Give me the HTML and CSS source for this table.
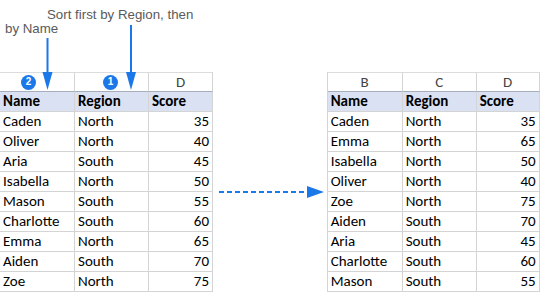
FILE: index.html
```html
<!DOCTYPE html>
<html>
<head>
<meta charset="utf-8">
<link rel="stylesheet" href="styles.css">
</head>
<body>
<div class="page">
  <div class="note">
    <div class="line1">Sort first by Region, then</div>
    <div class="line2">by Name</div>
  </div>
  <div class="main">
    <div class="sheet left">
      <div class="row colhdr">
        <div class="cell"><span class="badge b2">2</span></div>
        <div class="cell"><span class="badge b1">1</span></div>
        <div class="cell center">D</div>
      </div>
      <div class="row hdr">
        <div class="cell">Name</div><div class="cell">Region</div><div class="cell">Score</div>
      </div>
      <div class="row"><div class="cell">Caden</div><div class="cell">North</div><div class="cell num">35</div></div>
      <div class="row"><div class="cell">Oliver</div><div class="cell">North</div><div class="cell num">40</div></div>
      <div class="row"><div class="cell">Aria</div><div class="cell">South</div><div class="cell num">45</div></div>
      <div class="row"><div class="cell">Isabella</div><div class="cell">North</div><div class="cell num">50</div></div>
      <div class="row"><div class="cell">Mason</div><div class="cell">South</div><div class="cell num">55</div></div>
      <div class="row"><div class="cell">Charlotte</div><div class="cell">South</div><div class="cell num">60</div></div>
      <div class="row"><div class="cell">Emma</div><div class="cell">North</div><div class="cell num">65</div></div>
      <div class="row"><div class="cell">Aiden</div><div class="cell">South</div><div class="cell num">70</div></div>
      <div class="row"><div class="cell">Zoe</div><div class="cell">North</div><div class="cell num">75</div></div>
    </div>
    <div class="gap">
      <svg class="rarrow" width="108" height="14" viewBox="0 0 108 14">
        <line x1="1" y1="7" x2="92" y2="7" stroke="#1a78e8" stroke-width="2" stroke-dasharray="5 3"/>
        <polygon points="89,1 106,7 89,13" fill="#1a78e8"/>
      </svg>
    </div>
    <div class="sheet right">
      <div class="row colhdr">
        <div class="cell center">B</div>
        <div class="cell center">C</div>
        <div class="cell center">D</div>
      </div>
      <div class="row hdr">
        <div class="cell">Name</div><div class="cell">Region</div><div class="cell">Score</div>
      </div>
      <div class="row"><div class="cell">Caden</div><div class="cell">North</div><div class="cell num">35</div></div>
      <div class="row"><div class="cell">Emma</div><div class="cell">North</div><div class="cell num">65</div></div>
      <div class="row"><div class="cell">Isabella</div><div class="cell">North</div><div class="cell num">50</div></div>
      <div class="row"><div class="cell">Oliver</div><div class="cell">North</div><div class="cell num">40</div></div>
      <div class="row"><div class="cell">Zoe</div><div class="cell">North</div><div class="cell num">75</div></div>
      <div class="row"><div class="cell">Aiden</div><div class="cell">South</div><div class="cell num">70</div></div>
      <div class="row"><div class="cell">Aria</div><div class="cell">South</div><div class="cell num">45</div></div>
      <div class="row"><div class="cell">Charlotte</div><div class="cell">South</div><div class="cell num">60</div></div>
      <div class="row"><div class="cell">Mason</div><div class="cell">South</div><div class="cell num">55</div></div>
    </div>
  </div>
  <svg class="darrows" width="160" height="92" viewBox="0 0 160 92">
    <rect x="46.5" y="38" width="2" height="36" fill="#1a78e8"/>
    <polygon points="42.5,72 52.5,72 47.5,90" fill="#1a78e8"/>
    <rect x="130" y="25" width="2" height="49" fill="#1a78e8"/>
    <polygon points="126,72 136,72 131,90" fill="#1a78e8"/>
  </svg>
</div>
</body>
</html>
```
FILE: styles.css
```css
html, body {
  margin: 0;
  padding: 0;
  background: #fff;
}
.page {
  position: relative;
  width: 540px;
  height: 292px;
  overflow: hidden;
}
.note {
  height: 72px;
  font-family: "Liberation Sans", Arial, sans-serif;
  font-size: 13.3px;
  line-height: 14px;
  color: #5a5a5a;
  padding-top: 8px;
  box-sizing: border-box;
}
.line1 { padding-left: 47px; }
.line2 { padding-left: 5px; }
.main {
  display: flex;
  align-items: flex-start;
}
.sheet {
  font-family: Carlito, Calibri, Lato, sans-serif;
  font-size: 15px;
  color: #000;
}
.left { width: 213px; }
.right {
  width: 213px;
  border-left: 1px solid #d4d4d4;
}
.row {
  display: grid;
  grid-template-columns: 75px 74px 64px;
  height: 20px;
}
.right .row { grid-template-columns: 75px 74px 63px; }
.cell {
  box-sizing: border-box;
  height: 20px;
  border-right: 1px solid #d4d4d4;
  border-bottom: 1px solid #d4d4d4;
  padding: 0 3px;
  line-height: 19px;
  white-space: nowrap;
}
.num { text-align: right; }
.center { text-align: center; color: #444; }
.colhdr .cell {
  border-top: 1px solid #dcdcdc;
  border-bottom: 1px solid #a7aebb;
  line-height: 17px;
  display: flex;
  align-items: center;
  justify-content: center;
}
.hdr .cell {
  background: #d9e1f2;
  font-weight: bold;
}
.left .colhdr .cell:nth-child(1),
.left .colhdr .cell:nth-child(2) {
  justify-content: flex-start;
}
.badge {
  display: inline-flex;
  align-items: center;
  justify-content: center;
  width: 15px;
  height: 15px;
  border-radius: 50%;
  background: #1a78e8;
  color: #fff;
  font-family: "Liberation Sans", Arial, sans-serif;
  font-weight: bold;
  font-size: 10px;
  line-height: 1;
}
.b2 { margin-left: 18px; }
.b1 { margin-left: 25px; }
.gap {
  width: 114px;
  padding-top: 113px;
  display: flex;
  justify-content: flex-start;
}
.rarrow {
  display: block;
  margin-left: 5px;
}
.darrows {
  position: absolute;
  left: 0;
  top: 0;
}
```
